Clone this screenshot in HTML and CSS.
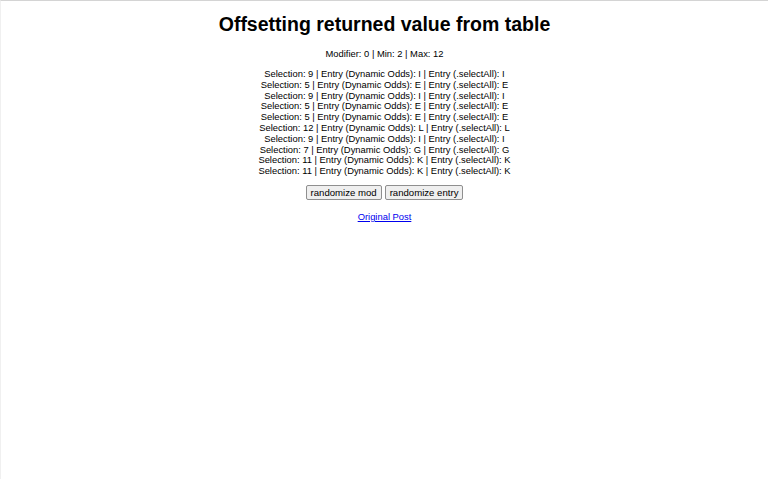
FILE: index.html
```html
<!DOCTYPE html>
<html>
<head>
<meta charset="utf-8">
<link rel="stylesheet" href="styles.css">
</head>
<body>
<div class="page">
  <h1 class="title">Offsetting returned value from table</h1>
  <p class="info">Modifier: 0 | Min: 2 | Max: 12</p>
  <div class="results">
    <div>Selection: 9 | Entry (Dynamic Odds): I | Entry (.selectAll): I</div>
    <div>Selection: 5 | Entry (Dynamic Odds): E | Entry (.selectAll): E</div>
    <div>Selection: 9 | Entry (Dynamic Odds): I | Entry (.selectAll): I</div>
    <div>Selection: 5 | Entry (Dynamic Odds): E | Entry (.selectAll): E</div>
    <div>Selection: 5 | Entry (Dynamic Odds): E | Entry (.selectAll): E</div>
    <div>Selection: 12 | Entry (Dynamic Odds): L | Entry (.selectAll): L</div>
    <div>Selection: 9 | Entry (Dynamic Odds): I | Entry (.selectAll): I</div>
    <div>Selection: 7 | Entry (Dynamic Odds): G | Entry (.selectAll): G</div>
    <div>Selection: 11 | Entry (Dynamic Odds): K | Entry (.selectAll): K</div>
    <div>Selection: 11 | Entry (Dynamic Odds): K | Entry (.selectAll): K</div>
  </div>
  <div class="buttons">
    <button class="btn">randomize mod</button>
    <button class="btn">randomize entry</button>
  </div>
  <p class="link-row"><a href="#" class="link">Original Post</a></p>
</div>
</body>
</html>
```
FILE: styles.css
```css
html, body {
  margin: 0;
  padding: 0;
  background: #fff;
}
body {
  border-top: 1px solid #d4d4d4;
  border-left: 1px solid #f0f0f0;
  height: 479px;
  box-sizing: border-box;
  font-family: "Liberation Sans", Arial, sans-serif;
  color: #000;
}
.page {
  padding: 8px;
  text-align: center;
}
.title {
  font-size: 19.5px;
  font-weight: bold;
  margin: 0;
  line-height: 30px;
}
.info {
  font-size: 9.4px;
  margin: 9px 0 0;
  line-height: 12px;
}
.results {
  font-size: 9.4px;
  line-height: 10.8px;
  margin-top: 9px;
}
.buttons {
  margin-top: 8px;
  display: flex;
  justify-content: center;
  gap: 3px;
}
.btn {
  font-family: "Liberation Sans", Arial, sans-serif;
  font-size: 9.6px;
  padding: 1px 4px;
  border: 1px solid #8f8f8f;
  border-radius: 2px;
  background: #efefef;
  color: #000;
}
.link-row {
  font-size: 9.4px;
  margin: 11px 0 0;
}
.link {
  color: #0000ee;
}
```
